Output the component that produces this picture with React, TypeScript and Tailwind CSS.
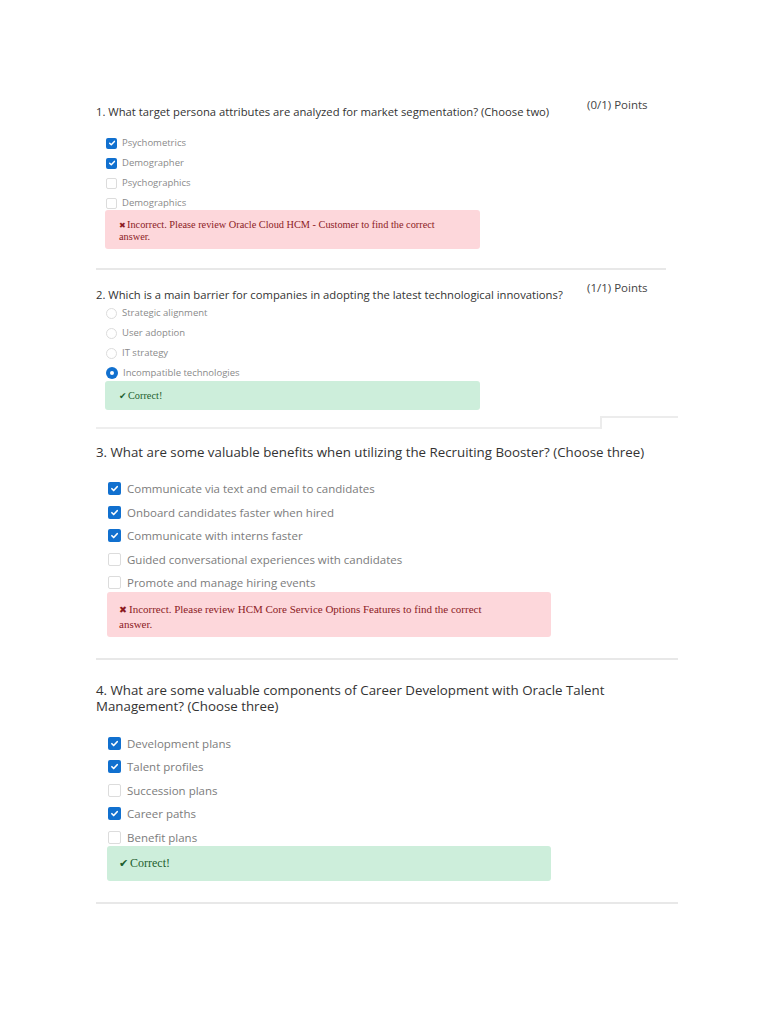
import React from 'react';

type Opt = { label: string; checked?: boolean };

const FONT = { fontFamily: '"Open Sans", "Noto Sans", sans-serif' };
const SERIF = { fontFamily: '"Liberation Serif", "DejaVu Serif", serif' };
const GLYPH = { fontFamily: '"DejaVu Sans", sans-serif' };

function SmallCheck({ checked }: { checked?: boolean }) {
  if (checked) {
    return (
      <span className="flex h-[11px] w-[11px] shrink-0 items-center justify-center rounded-[2px] bg-[#1170cf]">
        <svg viewBox="0 0 12 12" className="h-[8px] w-[8px]" fill="none" stroke="white" strokeWidth={2.2} strokeLinecap="round" strokeLinejoin="round">
          <path d="M2.5 6.3l2.4 2.4L9.6 3.6" />
        </svg>
      </span>
    );
  }
  return <span className="h-[11px] w-[11px] shrink-0 rounded-[2px] border border-[#dcdcdc] bg-white" />;
}

function BigCheck({ checked }: { checked?: boolean }) {
  if (checked) {
    return (
      <span className="flex h-[13px] w-[13px] shrink-0 items-center justify-center rounded-[2px] bg-[#1170cf]">
        <svg viewBox="0 0 12 12" className="h-[9px] w-[9px]" fill="none" stroke="white" strokeWidth={2.2} strokeLinecap="round" strokeLinejoin="round">
          <path d="M2.5 6.3l2.4 2.4L9.6 3.6" />
        </svg>
      </span>
    );
  }
  return <span className="h-[13px] w-[13px] shrink-0 rounded-[2px] border border-[#dcdcdc] bg-white" />;
}

function Radio({ checked }: { checked?: boolean }) {
  if (checked) {
    return (
      <span className="flex h-[12px] w-[12px] shrink-0 items-center justify-center rounded-full bg-[#1170cf]">
        <span className="h-[4px] w-[4px] rounded-full bg-white" />
      </span>
    );
  }
  return <span className="h-[11px] w-[11px] shrink-0 rounded-full border border-[#dcdcdc] bg-white" />;
}

function Incorrect({ text, size }: { text: string; size: 'sm' | 'lg' }) {
  if (size === 'sm') {
    return (
      <div className="ml-[9px] mt-[-3px] h-[39px] w-[375px] rounded-[3px] bg-[#fdd7db] pl-[14px] pt-[9px]">
        <p className="w-[330px] text-[10.3px] leading-[11px] text-[#8c1b1f]" style={SERIF}>
          <span className="mr-[1px] inline-block w-[7px] text-[8px] leading-[11px] font-bold" style={GLYPH}>✖</span>
          {text}
        </p>
      </div>
    );
  }
  return (
    <div className="ml-[11px] mt-[-3px] h-[45px] w-[444px] rounded-[3px] bg-[#fdd7db] pl-[12px] pt-[10px]">
      <p className="w-[380px] text-[11px] leading-[14px] text-[#8c1b1f]" style={SERIF}>
        <span className="mr-[1px] inline-block w-[9px] text-[9.5px] leading-[14px] font-bold" style={GLYPH}>✖</span>
        {text}
      </p>
    </div>
  );
}

function Correct({ size }: { size: 'sm' | 'lg' }) {
  if (size === 'sm') {
    return (
      <div className="ml-[9px] mt-[-2px] flex h-[29px] w-[375px] items-center rounded-[3px] bg-[#cdeedb] pl-[14px]">
        <p className="text-[10.3px] text-[#1d5e2e]" style={SERIF}>
          <span className="inline-block w-[9px] text-[9px]" style={GLYPH}>✔</span>
          Correct!
        </p>
      </div>
    );
  }
  return (
    <div className="ml-[11px] mt-[-3px] flex h-[35px] w-[444px] items-center rounded-[3px] bg-[#cdeedb] pl-[12px]">
      <p className="text-[12px] text-[#1d5e2e]" style={SERIF}>
        <span className="inline-block w-[11px] text-[11px]" style={GLYPH}>✔</span>
        Correct!
      </p>
    </div>
  );
}

const q1: Opt[] = [
  { label: 'Psychometrics', checked: true },
  { label: 'Demographer', checked: true },
  { label: 'Psychographics' },
  { label: 'Demographics' },
];

const q2: Opt[] = [
  { label: 'Strategic alignment' },
  { label: 'User adoption' },
  { label: 'IT strategy' },
  { label: 'Incompatible technologies', checked: true },
];

const q3: Opt[] = [
  { label: 'Communicate via text and email to candidates', checked: true },
  { label: 'Onboard candidates faster when hired', checked: true },
  { label: 'Communicate with interns faster', checked: true },
  { label: 'Guided conversational experiences with candidates' },
  { label: 'Promote and manage hiring events' },
];

const q4: Opt[] = [
  { label: 'Development plans', checked: true },
  { label: 'Talent profiles', checked: true },
  { label: 'Succession plans' },
  { label: 'Career paths', checked: true },
  { label: 'Benefit plans' },
];

export default function App() {
  return (
    <div className="min-h-[1024px] w-[768px] bg-white" style={FONT}>
      <div className="pl-[96px] pt-[97px]">
        {/* Question 1 */}
        <div className="w-[570px]">
          <div className="flex items-start">
            <h2 className="mt-[7px] w-[491px] text-[11.25px] leading-[16px] text-[#333]">
              1. What target persona attributes are analyzed for market segmentation? (Choose two)
            </h2>
            <span className="text-[11.5px] leading-[16px] text-[#444]">(0/1) Points</span>
          </div>
          <div className="mt-[13px] flex flex-col">
            {q1.map((o) => (
              <div key={o.label} className="flex h-[20px] items-center gap-[5px] pl-[10px]">
                <SmallCheck checked={o.checked} />
                <span className="text-[9.5px] text-[#8a8a8a]">{o.label}</span>
              </div>
            ))}
          </div>
          <Incorrect size="sm" text="Incorrect. Please review Oracle Cloud HCM - Customer to find the correct answer." />
          <div className="mt-[19px] h-[2px] w-[570px] bg-[#e8e8e8]" />
        </div>

        {/* Question 2 */}
        <div className="mt-[10px] w-[582px]">
          <div className="flex items-start">
            <h2 className="mt-[7px] w-[491px] text-[11.25px] leading-[16px] text-[#333]">
              2. Which is a main barrier for companies in adopting the latest technological innovations?
            </h2>
            <span className="text-[11.5px] leading-[16px] text-[#444]">(1/1) Points</span>
          </div>
          <div className="flex flex-col">
            {q2.map((o) => (
              <div key={o.label} className="flex h-[20px] items-center gap-[5px] pl-[10px]">
                <Radio checked={o.checked} />
                <span className="text-[9.5px] text-[#8a8a8a]">{o.label}</span>
              </div>
            ))}
          </div>
          <Correct size="sm" />
          <div className="mt-[6px] flex items-end">
            <div className="h-[2px] w-[504px] bg-[#eeeeee]" />
            <div className="h-[13px] w-[78px] border-l-2 border-t-2 border-[#ececec]" />
          </div>
        </div>

        {/* Question 3 */}
        <div className="mt-[15px] w-[582px]">
          <h2 className="text-[13.3px] leading-[17px] text-[#333]">
            3. What are some valuable benefits when utilizing the Recruiting Booster? (Choose three)
          </h2>
          <div className="mt-[16px] flex flex-col">
            {q3.map((o) => (
              <div key={o.label} className="flex h-[23.5px] items-center gap-[6px] pl-[12px]">
                <BigCheck checked={o.checked} />
                <span className="text-[11.5px] text-[#7c7c7c]">{o.label}</span>
              </div>
            ))}
          </div>
          <Incorrect size="lg" text="Incorrect. Please review HCM Core Service Options Features to find the correct answer." />
          <div className="mt-[21px] h-[2px] w-[582px] bg-[#e8e8e8]" />
        </div>

        {/* Question 4 */}
        <div className="mt-[22px] w-[582px]">
          <h2 className="text-[13.3px] leading-[16px] text-[#333]">
            4. What are some valuable components of Career Development with Oracle Talent Management? (Choose three)
          </h2>
          <div className="mt-[18px] flex flex-col">
            {q4.map((o) => (
              <div key={o.label} className="flex h-[23.5px] items-center gap-[6px] pl-[12px]">
                <BigCheck checked={o.checked} />
                <span className="text-[11.5px] text-[#7c7c7c]">{o.label}</span>
              </div>
            ))}
          </div>
          <Correct size="lg" />
          <div className="mt-[21px] h-[2px] w-[582px] bg-[#e8e8e8]" />
        </div>
      </div>
    </div>
  );
}
